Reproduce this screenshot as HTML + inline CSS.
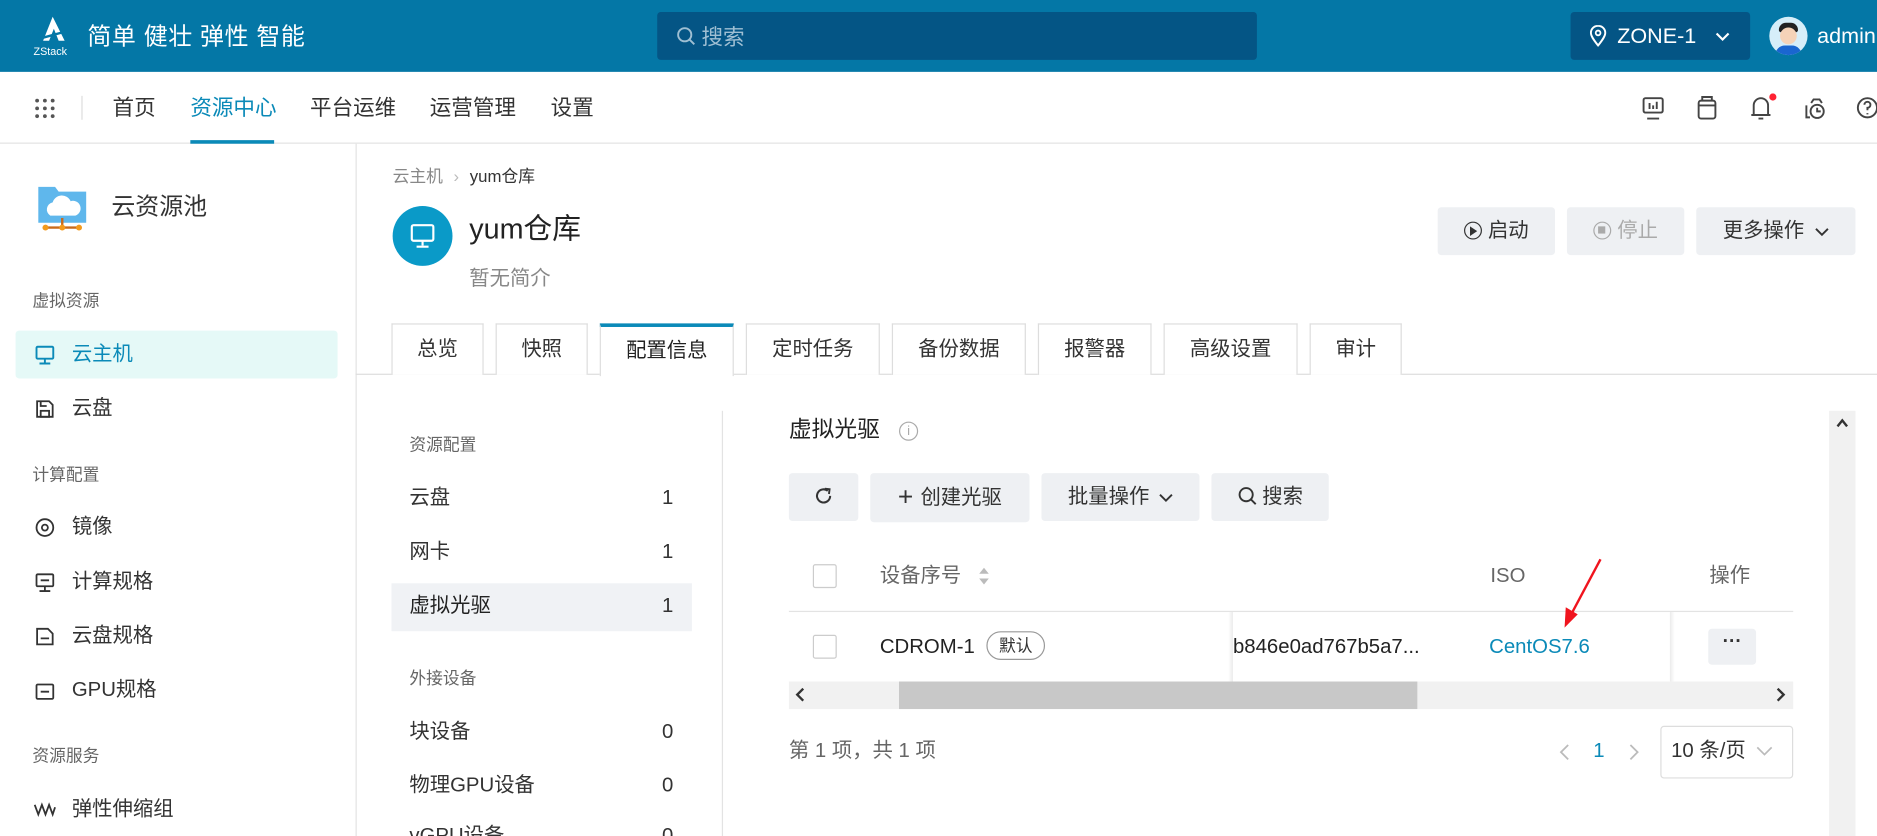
<!DOCTYPE html>
<html><head><meta charset="utf-8"><style>
*{margin:0;padding:0;box-sizing:border-box}
html,body{width:1877px;height:836px;overflow:hidden;background:#fff}
#w{position:absolute;left:0;top:0;width:1568px;height:698px;transform:scale(1.19707,1.19771);transform-origin:0 0;font-family:"Liberation Sans","Noto Sans CJK SC",sans-serif;color:#333;overflow:hidden;line-height:1.45}
.a{position:absolute;white-space:nowrap}
.btn{position:absolute;background:#eef0f3;border-radius:3px;font-size:17px;line-height:40px;text-align:center;color:#333}
.tab{position:absolute;top:270px;height:43px;border:1px solid #ddd;border-bottom:none;background:#fff;font-size:17px;line-height:42px;text-align:center;color:#333}
.sb{font-size:17px;color:#333}
.gl{font-size:14px;color:#666}
</style></head><body><div id="w">
<!-- top bar -->
<div class="a" style="left:0;top:0;width:1568px;height:60px;background:#0477a6"></div>
<svg class="a" style="left:28px;top:12px" width="36" height="36" viewBox="0 0 36 36"><path d="M16 2 L8 22 H13 L17 12 L21 22 H26 Z" fill="#fff"/><path d="M6 20 L28 14" stroke="#0477a6" stroke-width="2"/><text x="0" y="34" font-size="9" fill="#fff" font-family="Liberation Sans">ZStack</text></svg>
<div class="a" style="left:73px;top:17px;font-size:20px;color:#fff;letter-spacing:0.5px">简单 健壮 弹性 智能</div>
<div class="a" style="left:549px;top:10px;width:501px;height:40px;background:#045585;border-radius:3px"></div>
<svg class="a" style="left:565px;top:22px" width="16" height="16" viewBox="0 0 16 16"><circle cx="7" cy="7" r="5.5" stroke="#9fbfd3" stroke-width="1.6" fill="none"/><path d="M11 11 L15 15" stroke="#9fbfd3" stroke-width="1.6"/></svg>
<div class="a" style="left:586px;top:18px;font-size:18px;color:#9fbfd3">搜索</div>
<div class="a" style="left:1312px;top:10px;width:150px;height:40px;background:#045585;border-radius:3px"></div>
<svg class="a" style="left:1328px;top:21px" width="14" height="18" viewBox="0 0 14 18"><path d="M7 17 C3 12 1 9 1 6.5 A6 6 0 0 1 13 6.5 C13 9 11 12 7 17Z" stroke="#fff" stroke-width="1.6" fill="none"/><circle cx="7" cy="6.5" r="2" stroke="#fff" stroke-width="1.5" fill="none"/></svg>
<div class="a" style="left:1351px;top:17px;font-size:18px;color:#fff">ZONE-1</div>
<svg class="a" style="left:1432px;top:26px" width="14" height="10" viewBox="0 0 14 10"><path d="M2 2 L7 7 L12 2" stroke="#fff" stroke-width="1.8" fill="none"/></svg>
<div class="a" style="left:1478px;top:14px;width:32px;height:32px;border-radius:50%;background:#d6eef9;overflow:hidden"><div style="position:absolute;left:8px;top:5px;width:16px;height:8px;background:#222;border-radius:6px 6px 2px 2px"></div><div style="position:absolute;left:9px;top:9px;width:14px;height:14px;background:#f5d3b8;border-radius:50%"></div><div style="position:absolute;left:5px;top:24px;width:22px;height:12px;background:#1a66d0;border-radius:8px 8px 0 0"></div></div>
<div class="a" style="left:1518px;top:17px;font-size:18px;color:#fff">admin</div>
<!-- nav -->
<div class="a" style="left:0;top:119px;width:1568px;height:1px;background:#e3e3e3"></div>
<svg class="a" style="left:29px;top:82px" width="17" height="17" viewBox="0 0 17 17" fill="#555"><circle cx="2" cy="2" r="1.6"/><circle cx="8.5" cy="2" r="1.6"/><circle cx="15" cy="2" r="1.6"/><circle cx="2" cy="8.5" r="1.6"/><circle cx="8.5" cy="8.5" r="1.6"/><circle cx="15" cy="8.5" r="1.6"/><circle cx="2" cy="15" r="1.6"/><circle cx="8.5" cy="15" r="1.6"/><circle cx="15" cy="15" r="1.6"/></svg>
<div class="a" style="left:68px;top:80px;width:1px;height:20px;background:#ddd"></div>
<div class="a" style="left:94px;top:77px;font-size:18px">首页</div>
<div class="a" style="left:159px;top:77px;font-size:18px;color:#0b8ab8">资源中心</div>
<div class="a" style="left:159px;top:117px;width:70px;height:3px;background:#0b8ab8"></div>
<div class="a" style="left:259px;top:77px;font-size:18px">平台运维</div>
<div class="a" style="left:359px;top:77px;font-size:18px">运营管理</div>
<div class="a" style="left:460px;top:77px;font-size:18px">设置</div>
<svg class="a" style="left:1370px;top:78px" width="200" height="24" viewBox="0 0 200 24" fill="none" stroke="#444" stroke-width="1.6"><rect x="3" y="4" width="16" height="12" rx="1.5"/><path d="M6 21 H16 M8 8 V13 M11 10 V13 M14 7 V13"/><rect x="49" y="6" width="14" height="15" rx="2"/><path d="M52 6 V3 H60 V6 M49 10 H63"/><path d="M95 18 V10 A6 6 0 0 1 107 10 V18 Z M93 18 H109 M99 21 H103"/><circle cx="111" cy="3" r="3" fill="#f23" stroke="none"/><path d="M143 8 L145 5 H150 L152 8 M139 10 V20 H142"/><circle cx="148" cy="15" r="5.5"/><path d="M148 12 V15 H151"/><circle cx="190" cy="12" r="8"/><path d="M187.5 9.5 A2.5 2.5 0 1 1 190 12 V14 M190 16.5 V17.5"/></svg>
<!-- sidebar -->
<div class="a" style="left:297px;top:120px;width:1px;height:578px;background:#e3e3e3"></div>
<svg class="a" style="left:30px;top:152px" width="44" height="46" viewBox="0 0 44 46"><path d="M2 4 H16 L19 8 H42 V34 H2Z" fill="#5fb7ec"/><path d="M12 28 A6 6 0 0 1 14 17 A8 8 0 0 1 29 16 A6 6 0 0 1 33 28Z" fill="#fff"/><path d="M22 30 V38 M8 38 H36" stroke="#c86a1c" stroke-width="2"/><circle cx="8" cy="38" r="2.5" fill="#f39a1c"/><circle cx="22" cy="38" r="2.5" fill="#f39a1c"/><circle cx="36" cy="38" r="2.5" fill="#f39a1c"/></svg>
<div class="a" style="left:93px;top:159px;font-size:20px">云资源池</div>
<div class="a gl" style="left:27px;top:241px">虚拟资源</div>
<div class="a" style="left:13px;top:276px;width:269px;height:40px;background:#e5f9f7;border-radius:3px"></div>
<svg class="a" style="left:29px;top:288px" width="17" height="17" viewBox="0 0 17 17" fill="none" stroke="#0b8ab8" stroke-width="1.6"><rect x="1.5" y="1.5" width="14" height="10" rx="1"/><path d="M8.5 12 V15 M4 15.5 H13"/></svg>
<div class="a sb" style="left:60px;top:284px;color:#0b8ab8">云主机</div>
<svg class="a" style="left:29px;top:333px" width="17" height="17" viewBox="0 0 17 17" fill="none" stroke="#333" stroke-width="1.5"><path d="M2 2 H12 L15 5 V15 H2Z"/><rect x="5" y="10" width="7" height="5"/><path d="M5 2 V6 H10"/></svg>
<div class="a sb" style="left:60px;top:329px">云盘</div>
<div class="a gl" style="left:27px;top:386px">计算配置</div>
<svg class="a" style="left:29px;top:432px" width="17" height="17" viewBox="0 0 17 17" fill="none" stroke="#333" stroke-width="1.5"><circle cx="8.5" cy="8.5" r="7"/><circle cx="8.5" cy="8.5" r="2.5"/></svg>
<div class="a sb" style="left:60px;top:428px">镜像</div>
<svg class="a" style="left:29px;top:478px" width="17" height="17" viewBox="0 0 17 17" fill="none" stroke="#333" stroke-width="1.5"><rect x="1.5" y="1.5" width="14" height="10" rx="1"/><path d="M8.5 12 V15 M4 15.5 H13 M5 6.5 H12"/></svg>
<div class="a sb" style="left:60px;top:474px">计算规格</div>
<svg class="a" style="left:29px;top:523px" width="17" height="17" viewBox="0 0 17 17" fill="none" stroke="#333" stroke-width="1.5"><path d="M2 2 H11 L15 6 V15 H2Z M5 10 H12"/></svg>
<div class="a sb" style="left:60px;top:519px">云盘规格</div>
<svg class="a" style="left:29px;top:569px" width="17" height="17" viewBox="0 0 17 17" fill="none" stroke="#333" stroke-width="1.5"><rect x="1.5" y="2.5" width="14" height="12" rx="1"/><path d="M5 8.5 H12"/></svg>
<div class="a sb" style="left:60px;top:564px">GPU规格</div>
<div class="a gl" style="left:27px;top:621px">资源服务</div>
<svg class="a" style="left:28px;top:669px" width="19" height="14" viewBox="0 0 19 14" fill="none" stroke="#333" stroke-width="1.5"><path d="M1 3 L4 11 L7 3 L10 11 L13 3 L16 11 L18 5"/></svg>
<div class="a sb" style="left:60px;top:664px">弹性伸缩组</div>
<!-- header -->
<div class="a" style="left:328px;top:137px;font-size:14px;color:#888">云主机 <span style="color:#bbb;margin:0 5px">›</span> <span style="color:#333">yum仓库</span></div>
<div class="a" style="left:328px;top:172px;width:50px;height:50px;border-radius:50%;background:#0a9ac8"></div>
<svg class="a" style="left:342px;top:186px" width="22" height="22" viewBox="0 0 22 22" fill="none" stroke="#fff" stroke-width="1.8"><rect x="2" y="2" width="18" height="13" rx="1.5"/><path d="M11 15 V19 M6 20 H16"/></svg>
<div class="a" style="left:392px;top:175px;font-size:24px;color:#222">yum仓库</div>
<div class="a" style="left:392px;top:221px;font-size:17px;color:#888">暂无简介</div>
<div class="btn" style="left:1201px;top:173px;width:98px"><span style="display:inline-block;width:15px;height:15px;border:1.6px solid #333;border-radius:50%;vertical-align:-2px;margin-right:5px;position:relative"><span style="position:absolute;left:4px;top:2.5px;border-left:6px solid #333;border-top:4px solid transparent;border-bottom:4px solid transparent"></span></span>启动</div>
<div class="btn" style="left:1309px;top:173px;width:98px;color:#aaa"><span style="display:inline-block;width:15px;height:15px;border:1.6px solid #aaa;border-radius:50%;vertical-align:-2px;margin-right:5px;position:relative"><span style="position:absolute;left:3px;top:3px;width:6px;height:6px;background:#aaa"></span></span>停止</div>
<div class="btn" style="left:1417px;top:173px;width:133px">更多操作 <svg width="12" height="8" viewBox="0 0 12 8" style="margin-left:4px"><path d="M1 1 L6 6 L11 1" stroke="#333" stroke-width="1.6" fill="none"/></svg></div>
<!-- tabs -->
<div class="a" style="left:297px;top:312px;width:1271px;height:1px;background:#ddd"></div>
<div class="tab" style="left:327px;width:77px">总览</div>
<div class="tab" style="left:414px;width:77px">快照</div>
<div class="tab" style="left:501px;width:112px;height:44px;border-top:3px solid #0b8ab8;line-height:40px;color:#222">配置信息</div>
<div class="tab" style="left:623px;width:112px">定时任务</div>
<div class="tab" style="left:745px;width:112px">备份数据</div>
<div class="tab" style="left:867px;width:95px">报警器</div>
<div class="tab" style="left:972px;width:112px">高级设置</div>
<div class="tab" style="left:1094px;width:77px">审计</div>
<!-- inner menu -->
<div class="a" style="left:603px;top:343px;width:1px;height:355px;background:#e3e3e3"></div>
<div class="a gl" style="left:342px;top:361px">资源配置</div>
<div class="a sb" style="left:342px;top:404px">云盘</div><div class="a sb" style="left:553px;top:404px">1</div>
<div class="a sb" style="left:342px;top:449px">网卡</div><div class="a sb" style="left:553px;top:449px">1</div>
<div class="a" style="left:327px;top:487px;width:251px;height:40px;background:#f0f2f5"></div>
<div class="a sb" style="left:342px;top:494px;color:#222">虚拟光驱</div><div class="a sb" style="left:553px;top:494px">1</div>
<div class="a gl" style="left:342px;top:556px">外接设备</div>
<div class="a sb" style="left:342px;top:599px">块设备</div><div class="a sb" style="left:553px;top:599px">0</div>
<div class="a sb" style="left:342px;top:644px">物理GPU设备</div><div class="a sb" style="left:553px;top:644px">0</div>
<div class="a sb" style="left:342px;top:686px">vGPU设备</div><div class="a sb" style="left:553px;top:686px">0</div>
<!-- content -->
<div class="a" style="left:659px;top:346px;font-size:19px;color:#222">虚拟光驱</div>
<div class="a" style="left:751px;top:352px;width:16px;height:16px;border:1.3px solid #aaa;border-radius:50%;font-size:11px;line-height:14px;text-align:center;color:#aaa">i</div>
<div class="btn" style="left:659px;top:395px;width:58px"><svg width="16" height="16" viewBox="0 0 16 16" style="vertical-align:-2px"><path d="M13.5 8 A5.5 5.5 0 1 1 11.5 3.8" stroke="#333" stroke-width="1.7" fill="none"/><path d="M9 2 L13 2.5 L12.5 6.5" stroke="#333" stroke-width="1.6" fill="none"/></svg></div>
<div class="btn" style="left:727px;top:395px;width:133px"><span style="font-size:22px;vertical-align:-1px;margin-right:6px">+</span>创建光驱</div>
<div class="btn" style="left:870px;top:395px;width:132px">批量操作 <svg width="12" height="8" viewBox="0 0 12 8" style="margin-left:3px"><path d="M1 1 L6 6 L11 1" stroke="#333" stroke-width="1.6" fill="none"/></svg></div>
<div class="btn" style="left:1012px;top:395px;width:98px"><svg width="16" height="16" viewBox="0 0 16 16" style="vertical-align:-2px;margin-right:5px"><circle cx="7" cy="7" r="5.5" stroke="#333" stroke-width="1.6" fill="none"/><path d="M11 11 L15 15" stroke="#333" stroke-width="1.6"/></svg>搜索</div>
<!-- table -->
<div class="a" style="left:679px;top:471px;width:20px;height:20px;border:1px solid #ccc;border-radius:2px;background:#fff"></div>
<div class="a" style="left:735px;top:469px;font-size:17px;color:#666">设备序号</div>
<svg class="a" style="left:817px;top:473px" width="10" height="16" viewBox="0 0 10 16" fill="#bbb"><path d="M1 6 L5 1 L9 6Z M1 10 L5 15 L9 10Z"/></svg>
<div class="a" style="left:1245px;top:469px;font-size:17px;color:#666">ISO</div>
<div class="a" style="left:1428px;top:469px;font-size:17px;color:#666">操作</div>
<div class="a" style="left:659px;top:510px;width:839px;height:1px;background:#e3e3e3"></div>
<div class="a" style="left:679px;top:530px;width:20px;height:20px;border:1px solid #ccc;border-radius:2px;background:#fff"></div>
<div class="a" style="left:735px;top:528px;font-size:17px;color:#222">CDROM-1</div>
<div class="a" style="left:824px;top:527px;width:49px;height:24px;border:1px solid #999;border-radius:12px;font-size:14px;line-height:22px;text-align:center;color:#333">默认</div>
<div class="a" style="left:1026px;top:511px;width:4px;height:58px;background:linear-gradient(to right,rgba(0,0,0,0),rgba(0,0,0,.08))"></div>
<div class="a" style="left:1030px;top:528px;font-size:17px;color:#222">b846e0ad767b5a7...</div>
<div class="a" style="left:1244px;top:528px;font-size:17px;color:#0b8ab8">CentOS7.6</div>
<div class="a" style="left:1395px;top:511px;width:4px;height:58px;background:linear-gradient(to left,rgba(0,0,0,0),rgba(0,0,0,.08))"></div>
<div class="a" style="left:1427px;top:525px;width:40px;height:30px;background:#eef0f3;border-radius:3px;font-size:16px;line-height:22px;text-align:center;font-weight:bold">···</div>
<div class="a" style="left:659px;top:569px;width:839px;height:23px;background:#f1f1f1"></div>
<div class="a" style="left:751px;top:569px;width:433px;height:23px;background:#c8c8c8"></div>
<svg class="a" style="left:664px;top:574px" width="10" height="12" viewBox="0 0 10 12"><path d="M7 1 L2 6 L7 11" stroke="#333" stroke-width="2" fill="none"/></svg>
<svg class="a" style="left:1482px;top:574px" width="10" height="12" viewBox="0 0 10 12"><path d="M3 1 L8 6 L3 11" stroke="#333" stroke-width="2" fill="none"/></svg>
<svg class="a" style="left:1300px;top:462px" width="45" height="66" viewBox="0 0 45 66"><path d="M37 5 L12 52" stroke="#f0141e" stroke-width="2"/><path d="M7 62 L8 45 L18 51Z" fill="#f0141e"/></svg>
<!-- pagination -->
<div class="a" style="left:659px;top:615px;font-size:17px;color:#666">第 1 项，共 1 项</div>
<svg class="a" style="left:1300px;top:620px" width="80" height="16" viewBox="0 0 80 16"><path d="M10 2 L4 8 L10 14" stroke="#bbb" stroke-width="1.5" fill="none"/><path d="M62 2 L68 8 L62 14" stroke="#bbb" stroke-width="1.5" fill="none"/></svg>
<div class="a" style="left:1331px;top:615px;font-size:17px;color:#0b8ab8">1</div>
<div class="a" style="left:1387px;top:606px;width:111px;height:44px;border:1px solid #ddd;border-radius:3px;background:#fff"></div>
<div class="a" style="left:1396px;top:615px;font-size:17px;color:#333">10 条/页</div>
<svg class="a" style="left:1467px;top:623px" width="14" height="9" viewBox="0 0 14 9"><path d="M1 1 L7 7 L13 1" stroke="#bbb" stroke-width="1.4" fill="none"/></svg>
<!-- right scrollbar -->
<div class="a" style="left:1528px;top:343px;width:22px;height:355px;background:#f1f1f1"></div>
<svg class="a" style="left:1533px;top:348px" width="12" height="10" viewBox="0 0 12 10"><path d="M2 8 L6 3 L10 8" stroke="#333" stroke-width="2" fill="none"/></svg>
</div></body></html>
